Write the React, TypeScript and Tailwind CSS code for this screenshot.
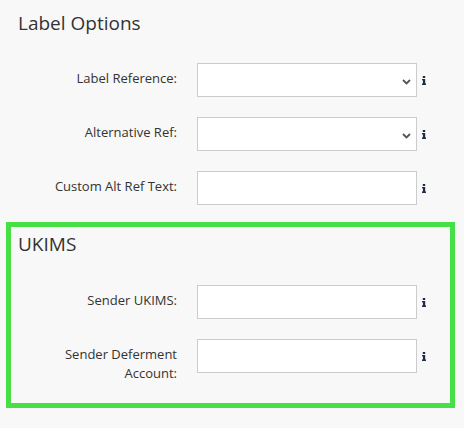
import React from 'react';

const InfoIcon = () => (
  <svg width="6" height="9" viewBox="0 0 6 9" className="shrink-0" fill="#1f2a44">
    <rect x="1.8" y="0" width="2.4" height="2" />
    <path d="M1 3h3.2v4.6H5V9H1V7.6h0.9V4.3H1z" />
  </svg>
);

const Chevron = () => (
  <svg width="9" height="6" viewBox="0 0 9 6" className="absolute right-[5px] top-[15px]">
    <path d="M1 1l3.5 3.5L8 1" fill="none" stroke="#555" strokeWidth="1.8" />
  </svg>
);

interface FieldRowProps {
  label: React.ReactNode;
  labelWidth: string;
  select?: boolean;
}

const FieldRow: React.FC<FieldRowProps> = ({ label, labelWidth, select }) => (
  <div className="flex items-start h-[34px]">
    <label className={`${labelWidth} shrink-0 pt-[6px] text-right text-[13px] leading-[19px] text-[#333]`}>{label}</label>
    <div className="ml-[20px] relative w-[220px] h-[34px] bg-white border border-[#ccc]">
      {select && <Chevron />}
    </div>
    <div className="ml-[4px] h-[34px] flex items-center">
      <InfoIcon />
    </div>
  </div>
);

export default function App() {
  return (
    <div className="w-[464px] h-[428px] bg-[#f8f8f8] pt-[9px] font-['Open_Sans',sans-serif]">
      <h2 className="pl-[18px] text-[19px] leading-[28px] text-[#333]">Label Options</h2>
      <div className="mt-[26px] flex flex-col gap-[20px]">
        <FieldRow label="Label Reference:" labelWidth="w-[177px]" select />
        <FieldRow label="Alternative Ref:" labelWidth="w-[177px]" select />
        <FieldRow label="Custom Alt Ref Text:" labelWidth="w-[177px]" />
      </div>
      <div className="mt-[17px] ml-[6px] w-[449px] border-[5px] border-[#46e046] pt-[3px] pb-[30px]">
        <h2 className="pl-[7px] text-[19px] leading-[28px] text-[#333]">UKIMS</h2>
        <div className="mt-[27px] flex flex-col gap-[20px]">
          <FieldRow label="Sender UKIMS:" labelWidth="w-[166px]" />
          <FieldRow label={<>Sender Deferment<br />Account:</>} labelWidth="w-[166px]" />
        </div>
      </div>
    </div>
  );
}
